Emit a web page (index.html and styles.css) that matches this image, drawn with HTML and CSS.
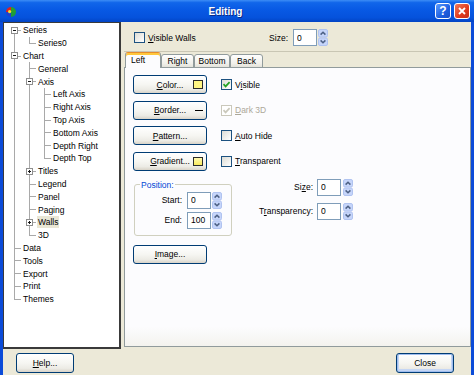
FILE: index.html
```html
<!DOCTYPE html>
<html lang="en">
<head>
    <meta charset="UTF-8">
    <meta name="viewport" content="width=device-width, initial-scale=1.0">
    <title>Editing</title>
    <link rel="stylesheet" href="styles.css">
</head>
<body>
    <svg class="defs" width="0" height="0" aria-hidden="true">
        <symbol id="spin" viewBox="0 0 10 17">
            <rect x="0.5" y="0.5" width="9" height="7.5" rx="1.5" fill="#c6d5fa" stroke="#b0c3f0"/>
            <rect x="0.5" y="9" width="9" height="7.5" rx="1.5" fill="#c6d5fa" stroke="#b0c3f0"/>
            <path d="M2.6 5.6 5 3.2l2.4 2.4" fill="none" stroke="#4d6185" stroke-width="1.5"/>
            <path d="M2.6 11.4 5 13.8l2.4-2.4" fill="none" stroke="#4d6185" stroke-width="1.5"/>
        </symbol>
        <symbol id="minus" viewBox="0 0 7 7">
            <rect x="0.5" y="0.5" width="6" height="6" fill="#fff" stroke="#8e8e8e"/>
            <path d="M2 3.5h3" stroke="#1a1a1a"/>
        </symbol>
        <symbol id="plus" viewBox="0 0 7 7">
            <rect x="0.5" y="0.5" width="6" height="6" fill="#fff" stroke="#8e8e8e"/>
            <path d="M2 3.5h3M3.5 2v3" stroke="#1a1a1a"/>
        </symbol>
        <symbol id="tick" viewBox="0 0 9 9">
            <path d="M1.5 4.2 3.6 6.4 7.6 2.2" fill="none" stroke="currentColor" stroke-width="1.7"/>
        </symbol>
    </svg>

    <div class="window">
        <header class="titlebar">
            <svg class="app-icon" width="10" height="10" viewBox="0 0 10 10">
                <path d="M5 5 5 0A5 5 0 0 0 0 5Z" fill="#e02020"/>
                <path d="M5 5 10 5A5 5 0 0 0 5 0Z" fill="#2aa02a"/>
                <path d="M5 5 5 10A5 5 0 0 0 10 5Z" fill="#1c9c3c"/>
                <path d="M5 5 0 5A5 5 0 0 0 5 10Z" fill="#2040d0"/>
                <circle cx="3.6" cy="4.6" r="1.6" fill="#f4e030"/>
            </svg>
            <h1 class="title">Editing</h1>
            <div class="caption-buttons">
                <span class="cap-btn cap-help">?</span>
                <span class="cap-btn cap-close">
                    <svg width="8" height="8" viewBox="0 0 8 8"><path d="M1 1l6 6M7 1 1 7" stroke="#fff" stroke-width="1.8"/></svg>
                </span>
            </div>
        </header>

        <div class="client">
            <div class="main">
                <ul class="tree">
                    <li class="node"><span class="g box-down"><svg class="box"><use href="#minus"/></svg></span><span class="label">Series</span></li>
                    <li class="node"><span class="g pipe"></span><span class="g ell"></span><span class="label">Series0</span></li>
                    <li class="node"><span class="g tee"><svg class="box"><use href="#minus"/></svg></span><span class="label">Chart</span></li>
                    <li class="node"><span class="g pipe"></span><span class="g tee"></span><span class="label">General</span></li>
                    <li class="node"><span class="g pipe"></span><span class="g tee"><svg class="box"><use href="#minus"/></svg></span><span class="label">Axis</span></li>
                    <li class="node"><span class="g pipe"></span><span class="g pipe"></span><span class="g tee"></span><span class="label">Left Axis</span></li>
                    <li class="node"><span class="g pipe"></span><span class="g pipe"></span><span class="g tee"></span><span class="label">Right Axis</span></li>
                    <li class="node"><span class="g pipe"></span><span class="g pipe"></span><span class="g tee"></span><span class="label">Top Axis</span></li>
                    <li class="node"><span class="g pipe"></span><span class="g pipe"></span><span class="g tee"></span><span class="label">Bottom Axis</span></li>
                    <li class="node"><span class="g pipe"></span><span class="g pipe"></span><span class="g tee"></span><span class="label">Depth Right</span></li>
                    <li class="node"><span class="g pipe"></span><span class="g pipe"></span><span class="g ell"></span><span class="label">Depth Top</span></li>
                    <li class="node"><span class="g pipe"></span><span class="g tee"><svg class="box"><use href="#plus"/></svg></span><span class="label">Titles</span></li>
                    <li class="node"><span class="g pipe"></span><span class="g tee"></span><span class="label">Legend</span></li>
                    <li class="node"><span class="g pipe"></span><span class="g tee"></span><span class="label">Panel</span></li>
                    <li class="node"><span class="g pipe"></span><span class="g tee"></span><span class="label">Paging</span></li>
                    <li class="node"><span class="g pipe"></span><span class="g tee"><svg class="box"><use href="#plus"/></svg></span><span class="label selected">Walls</span></li>
                    <li class="node"><span class="g pipe"></span><span class="g ell"></span><span class="label">3D</span></li>
                    <li class="node"><span class="g tee"></span><span class="label">Data</span></li>
                    <li class="node"><span class="g tee"></span><span class="label">Tools</span></li>
                    <li class="node"><span class="g tee"></span><span class="label">Export</span></li>
                    <li class="node"><span class="g tee"></span><span class="label">Print</span></li>
                    <li class="node"><span class="g ell"></span><span class="label">Themes</span></li>
                </ul>

                <section class="editor">
                    <div class="topbar">
                        <label class="check"><span class="cb"></span><span><u>V</u>isible Walls</span></label>
                        <div class="field top-size">
                            <span class="flabel">Size:</span>
                            <input class="num" type="text" value="0">
                            <svg class="spin"><use href="#spin"/></svg>
                        </div>
                    </div>

                    <div class="tabs">
                        <span class="tab active">Left</span>
                        <span class="tab t-right">Right</span>
                        <span class="tab t-bottom">Bottom</span>
                        <span class="tab t-back">Back</span>
                    </div>

                    <div class="page">
                        <div class="btn-row">
                            <button class="btn"><u>C</u>olor...<span class="swatch"></span></button>
                            <label class="check"><span class="cb"><svg class="tick"><use href="#tick"/></svg></span><span>V<u>i</u>sible</span></label>
                        </div>
                        <div class="btn-row">
                            <button class="btn"><u>B</u>order...<span class="dash"></span></button>
                            <label class="check disabled"><span class="cb"><svg class="tick"><use href="#tick"/></svg></span><span><u>D</u>ark 3D</span></label>
                        </div>
                        <div class="btn-row">
                            <button class="btn"><u>P</u>attern...</button>
                            <label class="check"><span class="cb"></span><span><u>A</u>uto Hide</span></label>
                        </div>
                        <div class="btn-row">
                            <button class="btn"><u>G</u>radient...<span class="swatch grad"></span></button>
                            <label class="check"><span class="cb"></span><span><u>T</u>ransparent</span></label>
                        </div>

                        <div class="pos-area">
                            <fieldset class="group">
                                <legend>Position:</legend>
                                <div class="field">
                                    <span class="flabel">Start:</span>
                                    <input class="num" type="text" value="0">
                                    <svg class="spin"><use href="#spin"/></svg>
                                </div>
                                <div class="field">
                                    <span class="flabel">End:</span>
                                    <input class="num" type="text" value="100">
                                    <svg class="spin"><use href="#spin"/></svg>
                                </div>
                            </fieldset>
                            <div class="pos-side">
                                <div class="field">
                                    <span class="flabel">Si<u>z</u>e:</span>
                                    <input class="num" type="text" value="0">
                                    <svg class="spin"><use href="#spin"/></svg>
                                </div>
                                <div class="field">
                                    <span class="flabel">T<u>r</u>ansparency:</span>
                                    <input class="num" type="text" value="0">
                                    <svg class="spin"><use href="#spin"/></svg>
                                </div>
                            </div>
                        </div>

                        <div class="btn-row image-row">
                            <button class="btn"><u>I</u>mage...</button>
                        </div>
                    </div>
                </section>
            </div>

            <footer class="footer">
                <button class="btn wide"><u>H</u>elp...</button>
                <button class="btn wide default">Close</button>
            </footer>
        </div>
    </div>
</body>
</html>
```

FILE: styles.css
```css
* {
    box-sizing: border-box;
}

body {
    margin: 0;
    width: 474px;
    height: 375px;
    overflow: hidden;
    font-family: "Liberation Sans", Arial, sans-serif;
    font-size: 8.5px;
    color: #000;
    background: #ece9d8;
}

.defs {
    position: absolute;
}

.window {
    display: flex;
    flex-direction: column;
    height: 375px;
}

/* title bar */
.titlebar {
    height: 22px;
    display: flex;
    align-items: center;
    padding: 0 4px 0 6px;
    background: linear-gradient(to bottom, #3d8df6 0%, #1166ea 12%, #0859e4 45%, #0552dc 80%, #0344c4 100%);
}

.app-icon {
    flex: none;
    margin-top: 2px;
}

.title {
    flex: 1;
    margin: 0;
    text-align: center;
    font-size: 10px;
    font-weight: bold;
    color: #fff;
    text-shadow: 1px 1px 0 #0b2a86;
}

.caption-buttons {
    display: flex;
    gap: 3px;
}

.cap-btn {
    width: 16px;
    height: 16px;
    border: 1px solid #fff;
    border-radius: 3px;
    display: flex;
    align-items: center;
    justify-content: center;
    color: #fff;
    font-weight: bold;
    font-size: 12px;
}

.cap-help {
    background: linear-gradient(135deg, #5d9cff, #1d5fe0 60%, #1a4fc8);
}

.cap-close {
    background: linear-gradient(135deg, #f07a5c, #de3a1c 60%, #c6301a);
}

/* client area */
.client {
    flex: 1;
    display: flex;
    flex-direction: column;
    border-left: 3px solid #0b4bd8;
    border-right: 3px solid #0b4bd8;
}

.main {
    height: 327px;
    display: flex;
}

/* tree */
.tree {
    width: 118px;
    flex: none;
    margin: 0;
    padding: 1px 0 0 2px;
    list-style: none;
    background: #fff;
    border: 1px solid #3a3a3a;
    border-right-width: 2px;
    border-bottom-width: 2px;
}

.node {
    height: 12.8px;
    display: flex;
    align-items: center;
    white-space: nowrap;
}

.g {
    width: 15px;
    height: 100%;
    flex: none;
    display: flex;
    align-items: center;
}

.pipe {
    background: linear-gradient(#a9a9a9, #a9a9a9) 8px 0 / 1px 100% no-repeat;
}

.tee {
    background:
        linear-gradient(#a9a9a9, #a9a9a9) 8px 0 / 1px 100% no-repeat,
        linear-gradient(#a9a9a9, #a9a9a9) 8px 6px / 7px 1px no-repeat;
}

.ell {
    background:
        linear-gradient(#a9a9a9, #a9a9a9) 8px 0 / 1px 7px no-repeat,
        linear-gradient(#a9a9a9, #a9a9a9) 8px 6px / 7px 1px no-repeat;
}

.box-down {
    background:
        linear-gradient(#a9a9a9, #a9a9a9) 8px 6px / 1px 7px no-repeat,
        linear-gradient(#a9a9a9, #a9a9a9) 8px 6px / 7px 1px no-repeat;
}

.box {
    width: 7px;
    height: 7px;
    margin-left: 5px;
    display: block;
}

.label {
    margin-left: 1px;
    padding: 0 1px;
    line-height: 12px;
}

.label.selected {
    background: #e9e6d5;
}

/* editor */
.editor {
    flex: 1;
    display: flex;
    flex-direction: column;
    padding: 0 0 2px 3px;
}

.topbar {
    height: 30px;
    flex: none;
    display: flex;
    align-items: center;
    padding: 2px 0 0 10px;
    border-bottom: 1px solid #c9c6b4;
}

.top-size {
    margin-left: auto;
    margin-right: 143px;
}

.check {
    display: flex;
    align-items: center;
    white-space: nowrap;
}

.cb {
    width: 11px;
    height: 11px;
    flex: none;
    margin-right: 3px;
    border: 1px solid #1c5180;
    background: linear-gradient(135deg, #dcdcd5, #fff);
    display: flex;
    align-items: center;
    justify-content: center;
    color: #21a121;
}

.tick {
    width: 9px;
    height: 9px;
}

.check.disabled {
    color: #aca899;
}

.check.disabled .cb {
    border-color: #cac8bb;
    background: #fff;
    color: #cac8bb;
}

.field {
    display: flex;
    align-items: center;
    white-space: nowrap;
}

.flabel {
    margin-right: 5px;
}

.num {
    width: 24px;
    height: 17px;
    margin: 0;
    padding: 0 3px;
    border: 1px solid #7f9db9;
    font-family: inherit;
    font-size: 8.5px;
    color: #000;
    background: #fff;
}

.spin {
    width: 10px;
    height: 17px;
    margin-left: 1px;
    flex: none;
}

/* tabs */
.tabs {
    height: 16px;
    flex: none;
    display: flex;
    align-items: flex-end;
    padding-left: 1px;
    margin-bottom: -1px;
}

.tab {
    height: 14px;
    width: 33px;
    border: 1px solid #919b9c;
    border-radius: 3px 3px 0 0;
    background: linear-gradient(#fefefe, #f1f0ea 70%, #e3e2da);
    text-align: center;
    line-height: 13px;
}

.tab.t-bottom {
    width: 36px;
}

.tab.active {
    width: 36px;
    height: 16px;
    padding-left: 5px;
    text-align: left;
    line-height: 14px;
    border-top-color: #e68b2c;
    border-bottom: none;
    background: #fcfcfe;
    box-shadow: inset 0 2px 0 #ffc73c;
    position: relative;
    z-index: 1;
}

.page {
    flex: 1;
    display: flex;
    flex-direction: column;
    padding: 7px 8px 0;
    border: 1px solid #919b9c;
    background: linear-gradient(#fcfcfe 0%, #fcfcfe 93%, #f4f3ee 100%);
}

.btn-row {
    height: 19px;
    display: flex;
    align-items: center;
    gap: 14px;
    margin-bottom: 6.5px;
}

.btn {
    position: relative;
    width: 74px;
    height: 19px;
    padding: 0;
    border: 1px solid #003c74;
    border-radius: 3px;
    background: linear-gradient(#ffffff, #f6f6f2 50%, #ecebe5 80%, #d8d3c8);
    font-family: inherit;
    font-size: 8.5px;
    color: #000;
}

.swatch {
    position: absolute;
    right: 3px;
    top: 4px;
    width: 10px;
    height: 9px;
    border: 1px solid #2b2b2b;
    background: #fff684;
}

.swatch.grad {
    background: linear-gradient(#fff9b0, #f8ea5c);
}

.dash {
    position: absolute;
    right: 3px;
    top: 8px;
    width: 8px;
    height: 1px;
    background: #000;
}

/* position group */
.pos-area {
    display: flex;
    align-items: flex-start;
    margin-top: 2.5px;
}

.group {
    width: 98px;
    margin: 0 0 0 1px;
    padding: 2px 9px 6px 5px;
    border: 1px solid #d0d0bf;
    border-radius: 3px;
}

.group legend {
    padding: 0 1px;
    line-height: 10px;
    color: #0046d5;
}

.group .field {
    justify-content: flex-end;
}

.group .field + .field {
    margin-top: 3px;
}

.pos-side {
    width: 121px;
    margin-top: -1px;
    display: flex;
    flex-direction: column;
    gap: 7px;
}

.pos-side .field {
    justify-content: flex-end;
}

.pos-side .flabel {
    margin-right: 4px;
}

.pos-side .spin {
    margin-left: 2px;
}

.image-row {
    margin-top: 9px;
}

/* footer */
.footer {
    flex: 1;
    display: flex;
    justify-content: space-between;
    align-items: flex-start;
    padding: 4px 17px 0 13px;
}

.btn.wide {
    width: 58px;
    height: 20px;
}

.btn.default {
    box-shadow: inset 0 0 0 1px #9fbdee, inset 0 -1px 0 2px #c5d6f4;
}
```
